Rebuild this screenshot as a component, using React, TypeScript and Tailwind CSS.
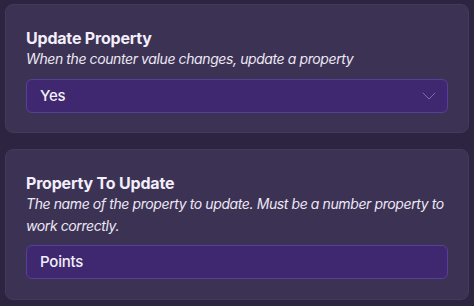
import React from 'react';
import { ChevronDown } from 'lucide-react';

const App: React.FC = () => {
  return (
    <div className="min-h-screen w-full bg-[#2c2441] px-[5px] pt-[4px] font-['Inter',sans-serif] text-white">
      <div className="flex flex-col gap-4">
        {/* Update Property */}
        <div className="rounded-lg border border-[#433a5a] bg-[#3c3254] px-[20px] pt-[23px] pb-[19px]">
          <h2 className="text-[16px] leading-5 font-bold tracking-[-0.2px] text-[#f2eefa]">Update Property</h2>
          <p className="text-[14px] leading-[22px] italic tracking-[-0.4px] text-[#ece8f4]">When the counter value changes, update a property</p>
          <div className="mt-[9px] flex h-[34px] items-center justify-between rounded-md border border-[#56409a] bg-[#3f286f] pl-[13px] pr-[6px]">
            <span className="text-[15px] font-medium tracking-[-0.2px] text-[#f2eefa]">Yes</span>
            <ChevronDown size={24} strokeWidth={1} className="text-[#7e69b3]" />
          </div>
        </div>

        {/* Property To Update */}
        <div className="rounded-lg border border-[#433a5a] bg-[#3c3254] px-[20px] pt-[23px] pb-5">
          <h2 className="text-[16px] leading-5 font-bold tracking-[-0.2px] text-[#f2eefa]">Property To Update</h2>
          <p className="text-[14px] leading-[22px] italic tracking-[-0.4px] text-[#ece8f4]">
            The name of the property to update. Must be a number property to work correctly.
          </p>
          <div className="mt-2 flex h-[34px] items-center rounded-md border border-[#56409a] bg-[#3f286f] px-[13px]">
            <span className="text-[15px] font-medium tracking-[-0.2px] text-[#f2eefa]">Points</span>
          </div>
        </div>
      </div>
    </div>
  );
};

export default App;
